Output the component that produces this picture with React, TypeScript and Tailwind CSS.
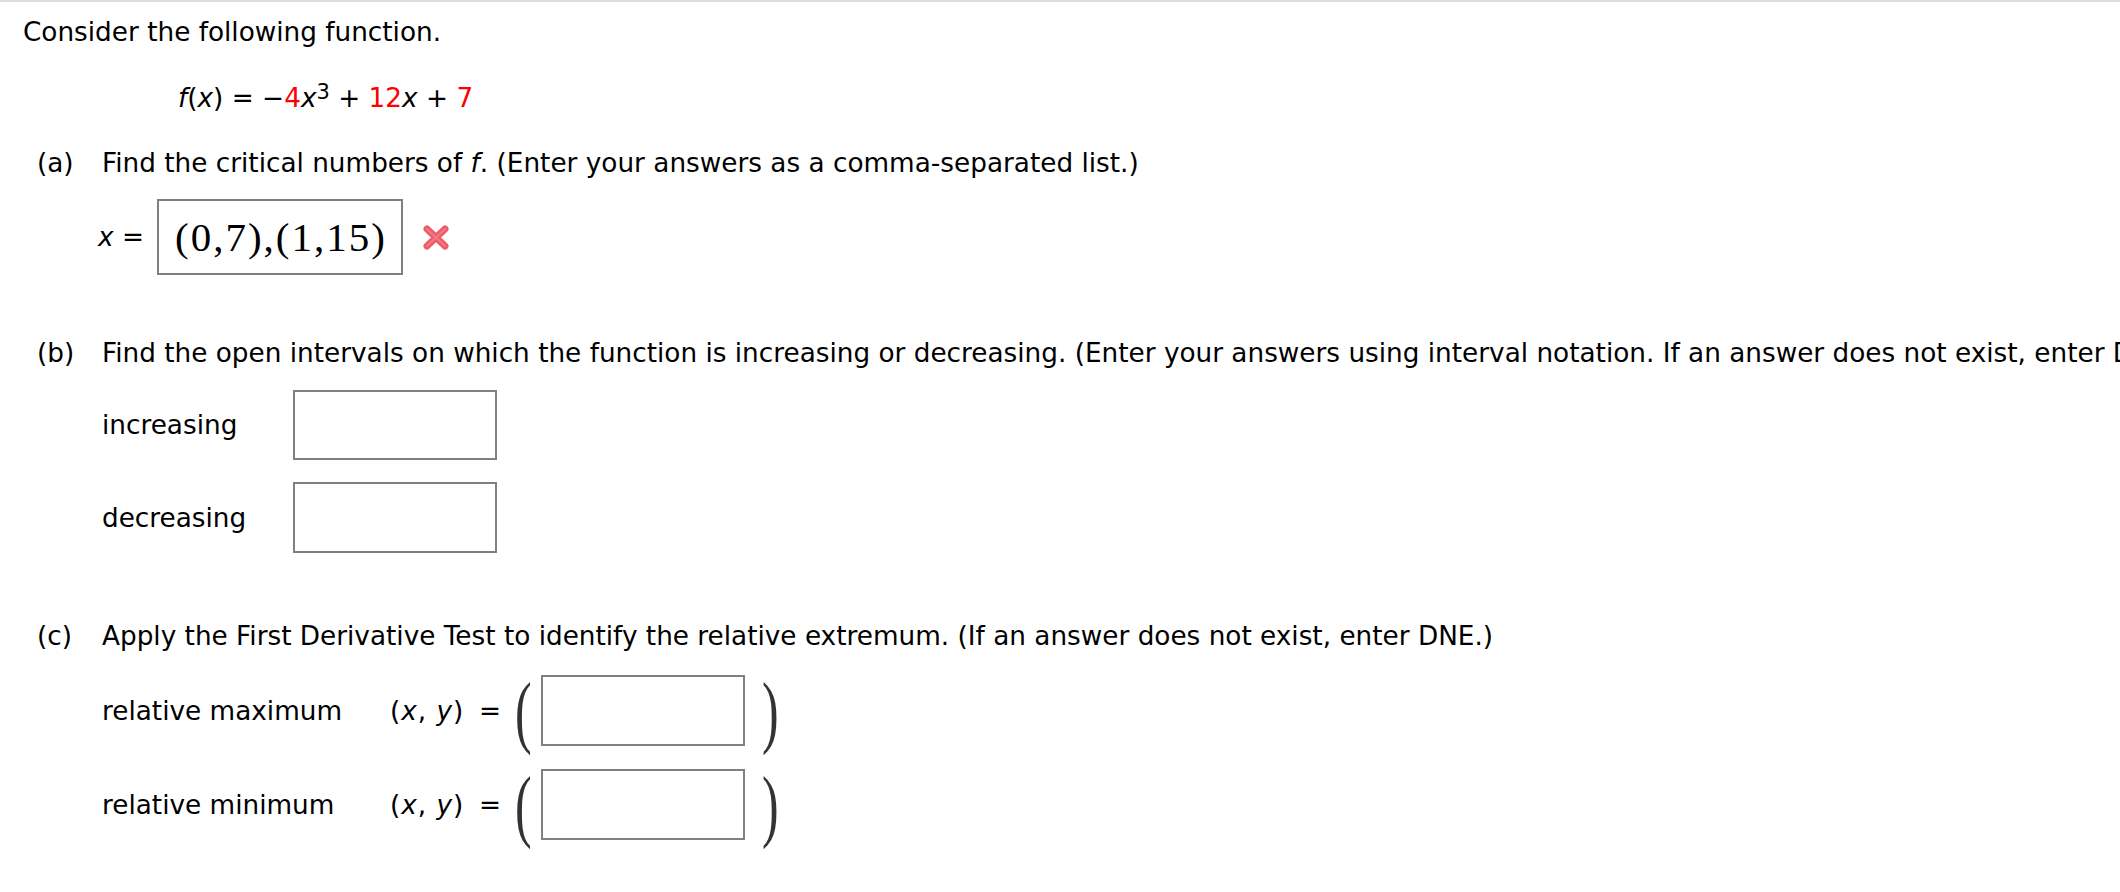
import React from "react";

function Box({ w, h }: { w: string; h: string }) {
  return <div className={`${w} ${h} border-2 border-[#808080] bg-white shrink-0`} />;
}

function RedX() {
  return (
    <svg width="28" height="25" viewBox="0 0 28 25" className="shrink-0">
      <path d="M5 4 L23 21 M23 4 L5 21" stroke="#ef5b66" strokeWidth="7" strokeLinecap="round" />
      <path d="M5 4 L23 21 M23 4 L5 21" stroke="#f89aa0" strokeWidth="2" strokeLinecap="round" opacity="0.5" />
    </svg>
  );
}

function Paren({ children }: { children: React.ReactNode }) {
  return (
    <span className="inline-block font-['Liberation_Serif',serif] text-[50px] leading-none scale-y-[1.6] text-[#333]">
      {children}
    </span>
  );
}

function PointRow({ label }: { label: string }) {
  return (
    <div className="flex items-center h-[71px] pl-[102px] whitespace-nowrap">
      <span className="w-[288px] shrink-0">{label}</span>
      <span className="w-[89px] shrink-0 tracking-[1px]">
        (<i>x</i>, <i>y</i>)
      </span>
      <span className="w-[36px] shrink-0">=</span>
      <span className="w-[26px] shrink-0">
        <Paren>(</Paren>
      </span>
      <Box w="w-[204px]" h="h-[71px]" />
      <span className="ml-[17px]">
        <Paren>)</Paren>
      </span>
    </div>
  );
}

export default function App() {
  return (
    <div className="w-full min-h-[892px] bg-white border-t-2 border-[#dcdcdc] font-['DejaVu_Sans',Verdana,sans-serif] text-[26.3px] leading-[30px] text-black overflow-hidden">
      <div className="pl-[23px] pt-[15px]">Consider the following function.</div>

      <div className="mt-[36px] pl-[178px] whitespace-nowrap">
        <i>f</i>(<i>x</i>) = −<span className="text-[#ff0000]">4</span>
        <i>x</i>
        <sup className="text-[21px] leading-none relative -top-[8px]">3</sup> + <span className="text-[#ff0000]">12</span>
        <i>x</i> + <span className="text-[#ff0000]">7</span>
      </div>

      <div className="mt-[35px] flex pl-[37px] whitespace-nowrap">
        <span className="w-[65px] shrink-0">(a)</span>
        <span>
          Find the critical numbers of <i>f</i>. (Enter your answers as a comma-separated list.)
        </span>
      </div>

      <div className="mt-[21px] flex items-center pl-[98px] whitespace-nowrap">
        <span className="w-[59px] shrink-0">
          <i>x</i> =
        </span>
        <div className="w-[246px] h-[76px] border-2 border-[#808080] flex items-center pl-[16px] shrink-0">
          <span className="font-['Liberation_Serif',serif] text-[41px] tracking-[2px] leading-none">
            (0,7),(1,15)
          </span>
        </div>
        <span className="ml-[19px] flex">
          <RedX />
        </span>
      </div>

      <div className="mt-[63px] flex pl-[37px] whitespace-nowrap">
        <span className="w-[65px] shrink-0">(b)</span>
        <span>
          Find the open intervals on which the function is increasing or decreasing. (Enter your answers using
          interval notation. If an answer does not exist, enter DNE.)
        </span>
      </div>

      <div className="mt-[22px] flex items-center h-[70px] pl-[102px]">
        <span className="w-[191px] shrink-0">increasing</span>
        <Box w="w-[204px]" h="h-[70px]" />
      </div>
      <div className="mt-[22px] flex items-center h-[71px] pl-[102px]">
        <span className="w-[191px] shrink-0">decreasing</span>
        <Box w="w-[204px]" h="h-[71px]" />
      </div>

      <div className="mt-[68px] flex pl-[37px] whitespace-nowrap">
        <span className="w-[65px] shrink-0">(c)</span>
        <span>
          Apply the First Derivative Test to identify the relative extremum. (If an answer does not exist, enter
          DNE.)
        </span>
      </div>

      <div className="mt-[24px]">
        <PointRow label="relative maximum" />
      </div>
      <div className="mt-[23px]">
        <PointRow label="relative minimum" />
      </div>
    </div>
  );
}
